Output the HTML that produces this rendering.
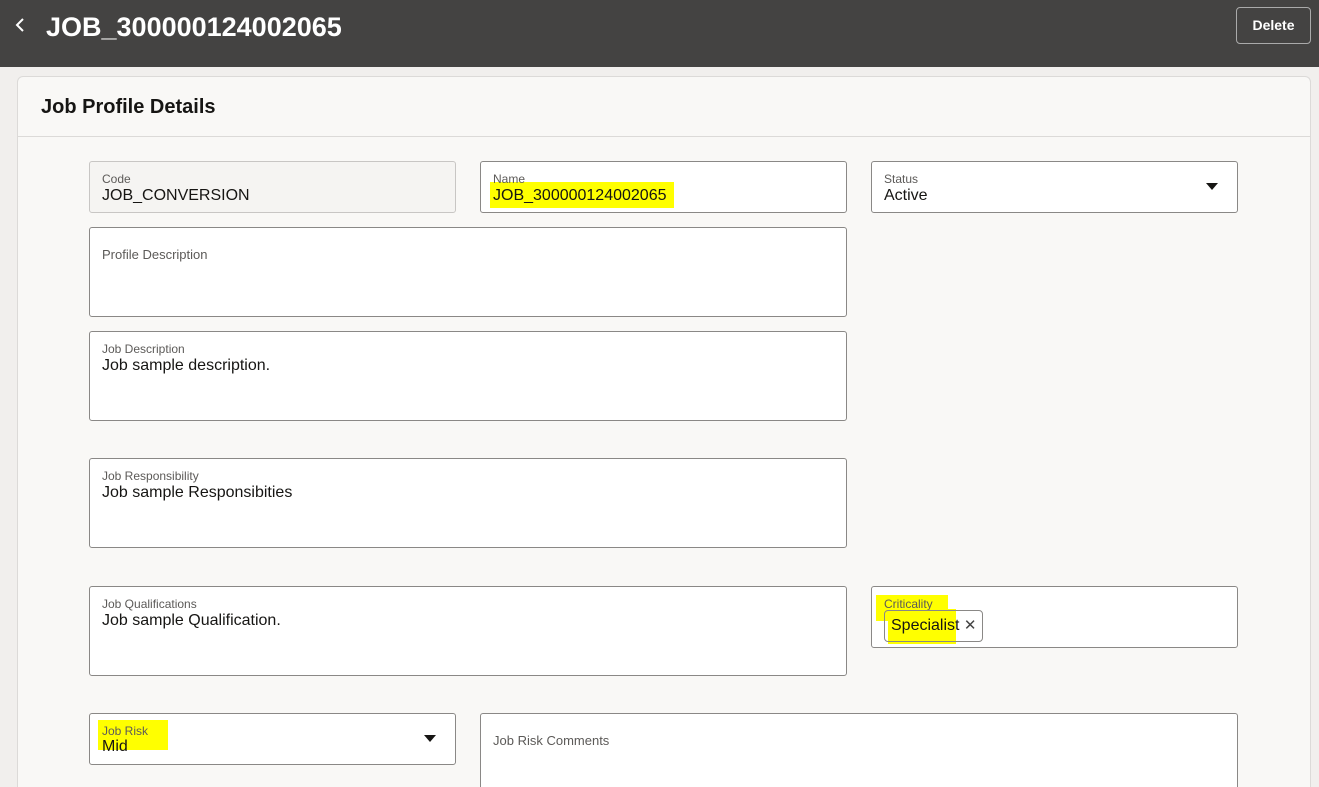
<!DOCTYPE html>
<html><head><style>
*{box-sizing:border-box;margin:0;padding:0}
html,body{width:1319px;height:787px;overflow:hidden}
body{background:#f1efed;font-family:"Liberation Sans",sans-serif;position:relative;color:#161513}
.hdr{position:absolute;left:0;top:0;width:1319px;height:67px;background:#444342}
.hdr .t{position:absolute;left:46px;top:12px;color:#fff;font-size:27px;font-weight:bold}
.del{position:absolute;left:1236px;top:7px;width:75px;height:37px;border:1px solid #aaa;border-radius:4px;color:#fff;font-size:14px;font-weight:bold;text-align:center;line-height:35px}
.card{position:absolute;left:17px;top:76px;width:1294px;height:711px;background:#f9f8f6;border:1px solid #dcdad8;border-bottom:none;border-radius:6px 6px 0 0}
.ct{position:absolute;left:41px;top:96px;font-size:20px;font-weight:bold}
.sep{position:absolute;left:17px;top:136px;width:1294px;height:1px;background:#dcdad8}
.f{position:absolute;background:#fff;border:1px solid #8a8886;border-radius:3px}
.f.ro{background:#f5f4f2;border-color:#c8c6c4}
.l{position:absolute;left:12px;top:10px;font-size:12px;color:#5c5a58}
.v{position:absolute;left:12px;top:25px;font-size:16px}
.hl{position:absolute;background:#ffff00}
.caret{position:absolute;right:19px;top:21px;width:0;height:0;border-left:6px solid transparent;border-right:6px solid transparent;border-top:7px solid #161513}
</style></head><body>
<div class="hdr"><svg style="position:absolute;left:14px;top:17px" width="12" height="16" viewBox="0 0 12 16"><path d="M9 2 L3 8 L9 14" fill="none" stroke="#fff" stroke-width="2"/></svg><div class="t">JOB_300000124002065</div><div class="del">Delete</div></div>
<div class="card"></div>
<div class="ct">Job Profile Details</div>
<div class="sep"></div>

<div class="f ro" style="left:89px;top:161px;width:367px;height:52px"><div class="l">Code</div><div class="v">JOB_CONVERSION</div></div>
<div class="f" style="left:480px;top:161px;width:367px;height:52px"><div class="hl" style="left:9px;top:20px;width:184px;height:26px"></div><div class="l">Name</div><div class="v">JOB_300000124002065</div></div>
<div class="f" style="left:871px;top:161px;width:367px;height:52px"><div class="l">Status</div><div class="v">Active</div><div class="caret"></div></div>

<div class="f" style="left:89px;top:227px;width:758px;height:90px"><div class="l" style="top:19px;font-size:13px">Profile Description</div></div>
<div class="f" style="left:89px;top:331px;width:758px;height:90px"><div class="l">Job Description</div><div class="v">Job sample description.</div></div>
<div class="f" style="left:89px;top:458px;width:758px;height:90px"><div class="l">Job Responsibility</div><div class="v">Job sample Responsibities</div></div>
<div class="f" style="left:89px;top:586px;width:758px;height:90px"><div class="l">Job Qualifications</div><div class="v">Job sample Qualification.</div></div>

<div class="f" style="left:871px;top:586px;width:367px;height:62px">
<div class="hl" style="left:4px;top:8px;width:72px;height:26px"></div>
<div class="hl" style="left:16px;top:22px;width:68px;height:35px"></div>
<div class="l">Criticality</div>
<div style="position:absolute;left:12px;top:23px;width:99px;height:32px;border:1px solid #8a8886;border-radius:4px;font-size:16px;line-height:30px;padding-left:6px">Specialist <span style="color:#444;font-size:15px">&#10005;</span></div>
</div>

<div class="f" style="left:89px;top:713px;width:367px;height:52px"><div class="hl" style="left:8px;top:6px;width:70px;height:30px"></div><div class="l">Job Risk</div><div class="v" style="top:24px">Mid</div><div class="caret"></div></div>
<div class="f" style="left:480px;top:713px;width:758px;height:74px;border-bottom:none;border-radius:3px 3px 0 0"><div class="l" style="top:19px;font-size:13px">Job Risk Comments</div></div>
</body></html>
